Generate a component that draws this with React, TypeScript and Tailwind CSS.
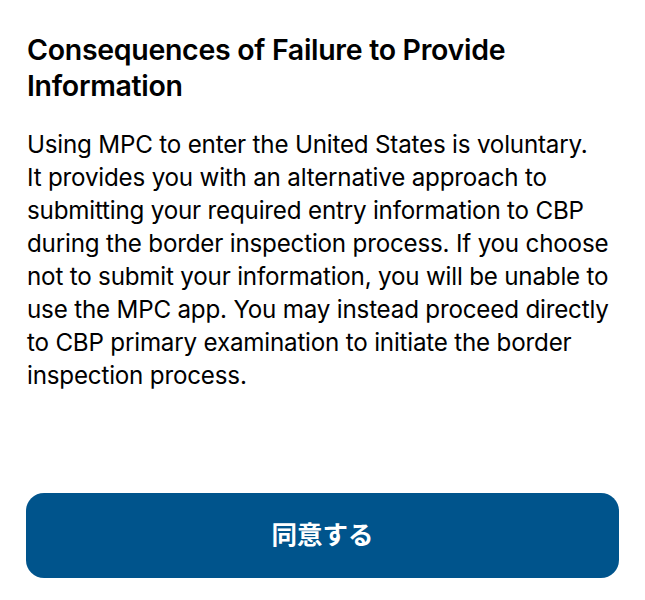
export default function App() {
  return (
    <div
      className="flex h-[600px] w-full flex-col bg-white px-[27px] text-black"
      style={{ fontFamily: 'Inter, "Noto Sans CJK JP", sans-serif' }}
    >
      {/* Title */}
      <h1 className="mt-[32px] text-[28.5px] font-semibold leading-[36px] tracking-[-0.3px]">
        Consequences of Failure to Provide Information
      </h1>

      {/* Body */}
      <p className="mt-[24px] text-[24.2px] leading-[33px] tracking-[-0.2px]">
        Using MPC to enter the United States is voluntary.
        <br />
        It provides you with an alternative approach to submitting your required entry information
        to CBP during the border inspection process. If you choose not to submit your information,
        you will be unable to use the MPC app. You may instead proceed directly to CBP primary
        examination to initiate the border inspection process.
      </p>

      {/* Agree */}
      <button className="mt-auto mb-[22px] ml-[-1px] h-[85px] w-[593px] rounded-[18px] bg-[#00548c] text-[25.5px] font-semibold text-white">
        同意する
      </button>
    </div>
  );
}
